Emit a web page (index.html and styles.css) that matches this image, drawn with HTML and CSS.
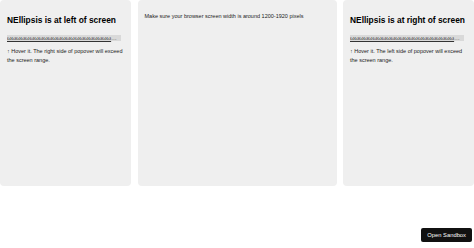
FILE: index.html
```html
<!DOCTYPE html>
<html>
<head>
<meta charset="utf-8">
<link rel="stylesheet" href="styles.css">
</head>
<body>
<div class="grid">
  <div class="card">
    <h2 class="title">NEllipsis is at left of screen</h2>
    <div class="ell"><span class="code">ωωωωωωωωωωωωωωωωωωωωωωωωωωωωωωωωωωωωωωωωωωωωωωω</span></div>
    <p class="desc">↑ Hover it. The right side of popover will exceed the screen range.</p>
  </div>
  <div class="card">
    <p class="note">Make sure your browser screen width is around 1200-1920 pixels</p>
  </div>
  <div class="card">
    <h2 class="title">NEllipsis is at right of screen</h2>
    <div class="ell"><span class="code">ωωωωωωωωωωωωωωωωωωωωωωωωωωωωωωωωωωωωωωωωωωωωωωω</span></div>
    <p class="desc">↑ Hover it. The left side of popover will exceed the screen range.</p>
  </div>
</div>
<button class="sandbox">Open Sandbox</button>
</body>
</html>
```
FILE: styles.css
```css
html, body { margin: 0; padding: 0; }
body {
  width: 474px; height: 248px; position: relative; overflow: hidden;
  font-family: "Liberation Sans", Arial, sans-serif; color: #1f1f1f; background: #fff;
}
.grid {
  display: grid; grid-template-columns: 131px 199px 131px; column-gap: 6.5px;
}
.card {
  background: #efefef; border-radius: 4px; height: 186px; padding: 7px;
  box-sizing: border-box; min-width: 0;
}
.title {
  font-size: 8.4px; font-weight: bold; margin: 8px 0 0 0; line-height: 11px; white-space: nowrap;
  color: #000;
}
.ell {
  margin-top: 9px; white-space: nowrap; overflow: hidden; text-overflow: ellipsis;
  font-size: 5.8px; line-height: 7px; color: #333; width: 114px;
}
.code { background: #d9d9d9; text-decoration: underline; }
.desc { font-size: 5.5px; line-height: 9px; margin: 5px 0 0 0; color: #222; }
.note { font-size: 5.5px; line-height: 8px; margin: 5px 0 0 0; color: #222; }
.sandbox {
  position: absolute; right: 2px; top: 228px; height: 13.5px; padding: 0 6px;
  background: #111; color: #fff; border: none; border-radius: 2px;
  font-family: "Liberation Sans", Arial, sans-serif; font-size: 5.8px;
}
```
